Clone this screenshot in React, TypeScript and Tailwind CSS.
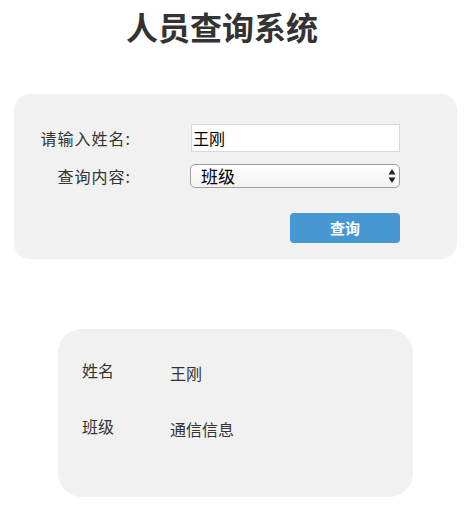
import { FC, useState } from "react";

const font = { fontFamily: '"Noto Sans CJK SC", "Noto Sans", sans-serif' };

const App: FC = () => {
  const [name, setName] = useState("王刚");
  const [field, setField] = useState("班级");

  return (
    <div className="w-[474px] h-[506px] bg-white text-[#333] flex flex-col" style={font}>
      <h1 className="mt-[6px] pr-[30px] text-center text-[32px] leading-[40px] font-bold text-[#333]">
        人员查询系统
      </h1>

      <div className="mt-[48px] ml-[14px] w-[443px] h-[165px] rounded-[16px] bg-[#f1f1f1] pt-[30px]">
        <div className="flex items-center">
          <label className="w-[117px] text-right text-[16px] leading-[24px] tracking-[1px]">请输入姓名:</label>
          <input
            className="ml-[60px] w-[209px] h-[28px] bg-white border border-[#d9d9d9] px-[1px] text-[16px] text-black outline-none"
            style={font}
            value={name}
            onChange={(e) => setName(e.target.value)}
          />
        </div>
        <div className="flex items-center mt-[12px]">
          <label className="w-[117px] text-right text-[16px] leading-[24px] tracking-[1px]">查询内容:</label>
          <div className="relative ml-[59px] w-[210px] h-[24px]">
            <select
              className="appearance-none w-full h-full rounded-[5px] border border-[#9f9f9f] bg-gradient-to-b from-white to-[#f3f3f3] pl-[10px] text-[17px] leading-[22px] text-black outline-none"
              style={font}
              value={field}
              onChange={(e) => setField(e.target.value)}
            >
              <option>班级</option>
              <option>学号</option>
              <option>电话</option>
            </select>
            <svg
              className="absolute right-[4px] top-[4px] pointer-events-none"
              width="8"
              height="16"
              viewBox="0 0 8 16"
            >
              <path d="M4 1 L7.5 6.5 L0.5 6.5 Z" fill="#222" />
              <path d="M4 15 L7.5 9.5 L0.5 9.5 Z" fill="#222" />
            </svg>
          </div>
        </div>
        <div className="flex mt-[25px]">
          <button className="ml-[276px] w-[110px] h-[30px] rounded-[4px] bg-[#4798d2] text-white text-[15px] font-bold">
            查询
          </button>
        </div>
      </div>

      <div className="mt-[70px] ml-[58px] w-[355px] h-[168px] rounded-[24px] bg-[#f1f1f1] pt-[29px] pl-[24px]">
        <div className="flex text-[16px] leading-[24px]">
          <span className="w-[88px]">姓名</span>
          <span className="mt-[3px]">{name}</span>
        </div>
        <div className="flex text-[16px] leading-[24px] mt-[29px]">
          <span className="w-[88px]">{field}</span>
          <span className="mt-[3px]">通信信息</span>
        </div>
      </div>
    </div>
  );
};

export default App;
